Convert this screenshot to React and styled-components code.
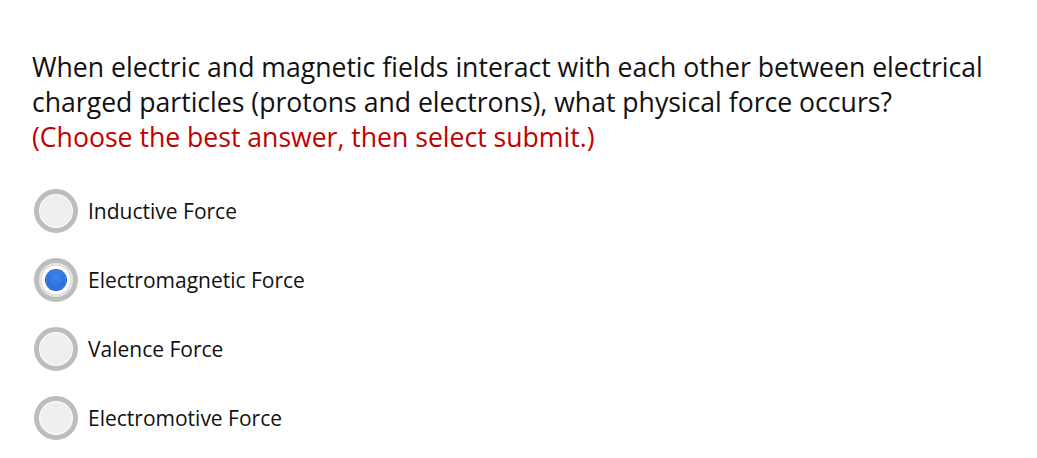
import React, { useState } from 'react';
import styled, { createGlobalStyle } from 'styled-components';

const GlobalStyle = createGlobalStyle`
    html, body {
        margin: 0;
        padding: 0;
        background: #ffffff;
    }
    body {
        font-family: "Open Sans", "Noto Sans", sans-serif;
        color: #111111;
    }
`;

const options = [
    'Inductive Force',
    'Electromagnetic Force',
    'Valence Force',
    'Electromotive Force',
];

const App = () => {
    const [selected, setSelected] = useState(1);

    return (
        <>
            <GlobalStyle />
            <Container>
                <Question>
                    When electric and magnetic fields interact with each other between electrical
                    charged particles (protons and electrons), what physical force occurs?
                    <Hint>(Choose the best answer, then select submit.)</Hint>
                </Question>
                <Options>
                    {options.map((label, i) => (
                        <Option key={label} onClick={() => setSelected(i)}>
                            <Radio $checked={selected === i} />
                            <Label>{label}</Label>
                        </Option>
                    ))}
                </Options>
            </Container>
        </>
    );
};

export default App;

const Container = styled.div`
    padding: 50px 32px 0 32px;
`;

const Question = styled.p`
    margin: 0;
    font-size: 26.6px;
    line-height: 35px;
    color: #111111;
    max-width: 990px;
`;

const Hint = styled.span`
    display: block;
    color: #c00000;
`;

const Options = styled.div`
    display: flex;
    flex-direction: column;
    gap: 25px;
    margin-top: 34px;
    padding-left: 2px;
`;

const Option = styled.label`
    display: flex;
    align-items: center;
    gap: 10px;
    height: 44px;
    cursor: pointer;
`;

const Radio = styled.span`
    box-sizing: border-box;
    width: 44px;
    height: 44px;
    border-radius: 50%;
    border: 5px solid #bdbdbd;
    background: ${(p) => (p.$checked ? '#ffffff' : '#efefef')};
    box-shadow: inset 0 0 0 1px #ffffff;
    display: flex;
    align-items: center;
    justify-content: center;
    flex-shrink: 0;
    &::after {
        content: '';
        display: ${(p) => (p.$checked ? 'block' : 'none')};
        width: 20px;
        height: 20px;
        border-radius: 50%;
        background: radial-gradient(circle at 50% 35%, #3d86ee, #1f63d6);
        box-shadow: 0 0 0 1px #1a55c0;
    }
    ${(p) => p.$checked && `box-shadow: inset 0 0 0 3px #e4e4e4;`}
`;

const Label = styled.span`
    font-size: 21px;
    color: #111111;
`;
